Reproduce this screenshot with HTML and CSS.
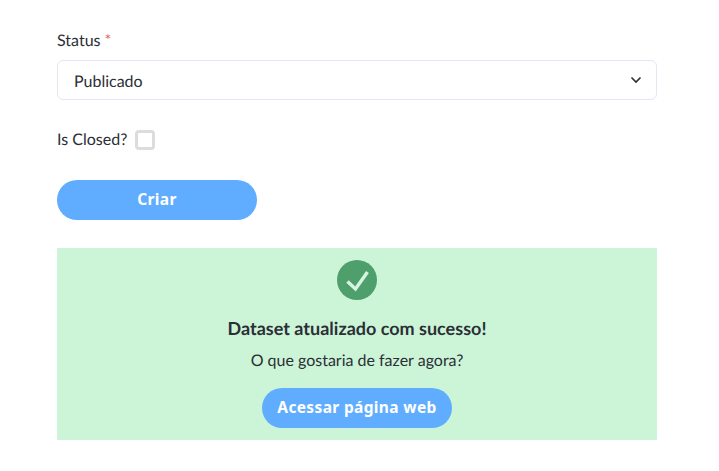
FILE: index.html
```html
<!DOCTYPE html>
<html lang="pt-BR">
<head>
    <meta charset="UTF-8">
    <meta name="viewport" content="width=device-width, initial-scale=1.0">
    <title>Criar Dataset</title>
    <link rel="stylesheet" href="styles.css">
</head>
<body>
    <div class="container">
        <div class="field">
            <label class="field-label">Status <span class="required">*</span></label>
            <div class="select-box">
                <span class="select-value">Publicado</span>
                <svg class="chevron" width="12" height="8" viewBox="0 0 12 8" fill="none">
                    <path d="M1.5 1.5 6 6l4.5-4.5" stroke="#2b2e35" stroke-width="1.6"/>
                </svg>
            </div>
        </div>

        <div class="check-row">
            <label>Is Closed?</label>
            <span class="checkbox"></span>
        </div>

        <button class="btn btn-submit">Criar</button>

        <div class="success-box">
            <svg class="success-icon" width="40" height="40" viewBox="0 0 40 40">
                <circle cx="20" cy="20" r="20" fill="#4f9f6d"/>
                <path d="M10.5 21.5 18.5 29 30.5 12" fill="none" stroke="#d5f5e0" stroke-width="3.4"/>
            </svg>
            <h2 class="success-title">Dataset atualizado com sucesso!</h2>
            <p class="success-text">O que gostaria de fazer agora?</p>
            <button class="btn btn-link">Acessar página web</button>
        </div>
    </div>
</body>
</html>
```

FILE: styles.css
```css
body {
    margin: 0;
    font-family: Lato, sans-serif;
    color: #2b2e35;
    background-color: #fff;
    text-rendering: geometricPrecision;
}
.container {
    width: 600px;
    margin-left: 57px;
    padding-top: 30px;
}
.field-label {
    display: block;
    height: 20px;
    margin-bottom: 10px;
    font-size: 16px;
    line-height: 22px;
}
.required {
    color: #e5665f;
}
.select-box {
    display: flex;
    align-items: center;
    justify-content: space-between;
    box-sizing: border-box;
    height: 40px;
    padding: 0 14px 0 16px;
    border: 1px solid #e6e6f2;
    border-radius: 6px;
    font-size: 16px;
}
.select-value {
    padding-top: 2px;
}
.check-row {
    display: flex;
    align-items: center;
    gap: 8px;
    height: 20px;
    margin-top: 30px;
    font-size: 16px;
    line-height: 20px;
}
.checkbox {
    box-sizing: border-box;
    width: 20px;
    height: 20px;
    border: 3px solid #dcdcdc;
    border-radius: 4px;
}
.btn {
    height: 40px;
    padding: 0 0 3px;
    border: none;
    border-radius: 20px;
    background-color: #60adff;
    color: #fff;
    font-family: "Noto Sans", sans-serif;
    font-size: 15.5px;
    font-weight: 700;
    letter-spacing: 0.35px;
}
.btn-submit {
    display: block;
    width: 200px;
    margin-top: 30px;
}
.success-box {
    display: flex;
    flex-direction: column;
    align-items: center;
    box-sizing: border-box;
    height: 192px;
    margin-top: 28px;
    padding-top: 12px;
    background-color: #ccf5d8;
}
.success-title {
    margin: 16px 0 0;
    font-size: 18px;
    font-weight: 700;
    line-height: 24px;
}
.success-text {
    margin: 10px 0 0;
    font-size: 16px;
    line-height: 22px;
}
.btn-link {
    width: 190px;
    margin-top: 16px;
}
```
